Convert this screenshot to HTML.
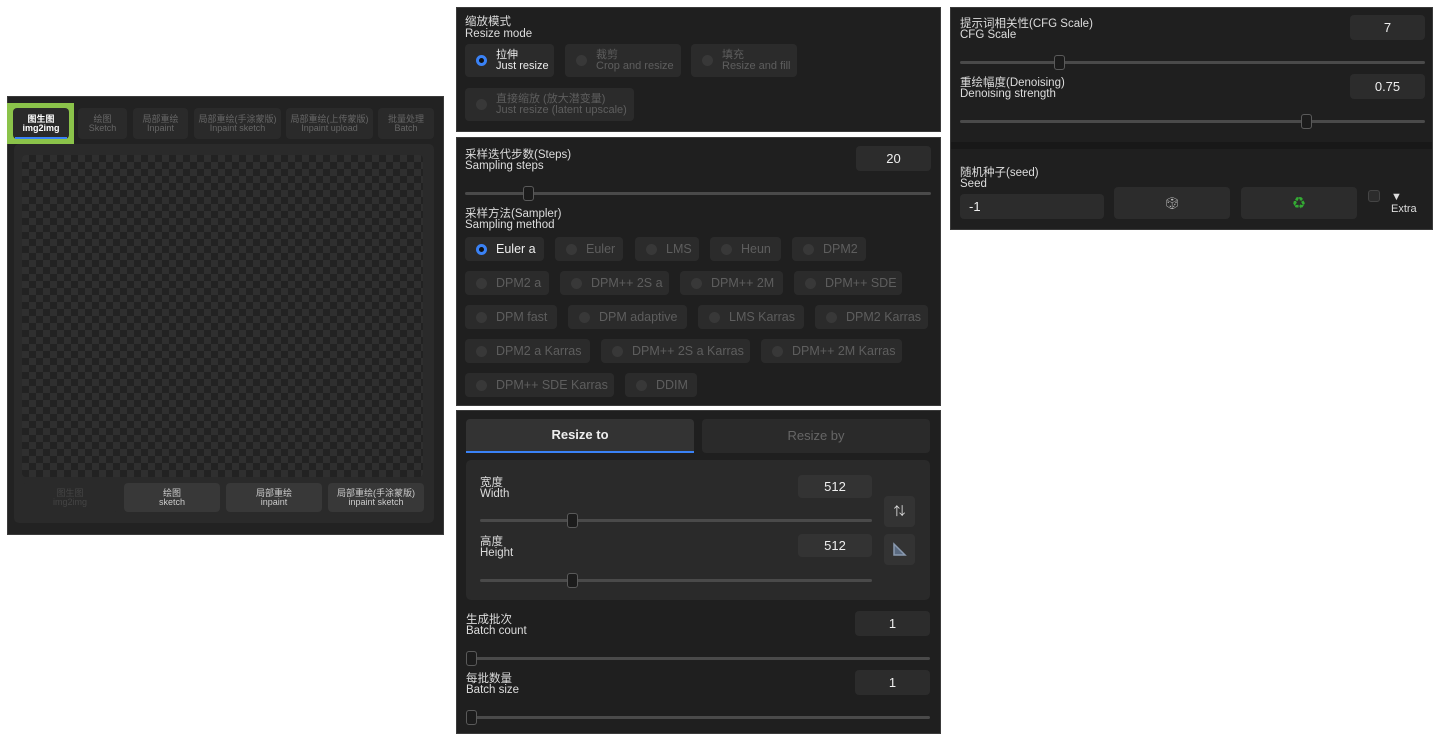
<!DOCTYPE html>
<html><head><meta charset="utf-8"><style>
*{box-sizing:border-box;margin:0;padding:0}
body{width:1440px;height:736px;background:#fff;position:relative;overflow:hidden;font-family:"Liberation Sans","Noto Sans CJK SC",sans-serif;color:#e8e8e8}
.a{position:absolute}
.panel{position:absolute;background:#1f1f1f;border:1px solid #3a3a3a}
.lbl{position:absolute;font-size:11px;line-height:11px;color:#ddd}
.num{position:absolute;background:#2c2c2c;border-radius:4px;text-align:center;font-size:13px;color:#eee}
.track{position:absolute;height:3px;background:#4a4a4a;border-radius:2px}
.thumb{position:absolute;width:11px;height:15px;background:#1c1c1c;border:1px solid #5a5a5a;border-radius:3px}
.rad{position:absolute;background:#2b2b2b;border-radius:4px;font-size:12.5px;color:#5e5e5e;display:flex;align-items:center;padding-left:11px;white-space:nowrap}
.rad i{display:inline-block;width:11px;height:11px;border-radius:50%;background:#383838;margin-right:9px;flex:none}
.rad.on{color:#eee}
.rad.on i{background:#111;border:3px solid #3a82f6}
.btn{position:absolute;background:#303030;border-radius:4px;text-align:center;font-size:9px;line-height:9px;color:#ccc}
.checker{background-color:#2f2f2f;background-image:linear-gradient(45deg,#222 25%,transparent 25%,transparent 75%,#222 75%),linear-gradient(45deg,#222 25%,transparent 25%,transparent 75%,#222 75%);background-size:14px 14px;background-position:0 0,7px 7px}
</style></head><body>

<!-- LEFT -->
<div class="panel" style="left:7px;top:96px;width:437px;height:439px;background:#222"></div>
<div class="a" style="left:7px;top:103px;width:67px;height:41px;background:#8bc34a"></div>
<div class="btn" style="left:13px;top:108px;width:56px;height:31px;background:#2a2a2a;color:#fff;padding-top:7px;font-weight:bold">图生图<br>img2img<div class="a" style="left:2px;bottom:0;width:52px;height:2px;background:#3a82f6"></div></div>
<div class="btn" style="left:78px;top:108px;width:49px;height:31px;background:#2a2a2a;color:#666;padding-top:7px">绘图<br>Sketch</div>
<div class="btn" style="left:133px;top:108px;width:55px;height:31px;background:#2a2a2a;color:#666;padding-top:7px">局部重绘<br>Inpaint</div>
<div class="btn" style="left:194px;top:108px;width:87px;height:31px;background:#2a2a2a;color:#666;padding-top:7px">局部重绘(手涂蒙版)<br>Inpaint sketch</div>
<div class="btn" style="left:286px;top:108px;width:87px;height:31px;background:#2a2a2a;color:#666;padding-top:7px">局部重绘(上传蒙版)<br>Inpaint upload</div>
<div class="btn" style="left:378px;top:108px;width:56px;height:31px;background:#2a2a2a;color:#666;padding-top:7px">批量处理<br>Batch</div>
<div class="a" style="left:14px;top:144px;width:420px;height:379px;background:#2a2a2a;border-radius:5px"></div>
<div class="a checker" style="left:22px;top:155px;width:401px;height:322px;border-radius:4px"></div>
<div class="btn" style="left:22px;top:483px;width:96px;height:29px;background:#2a2a2a;color:#444;padding-top:6px">图生图<br>img2img</div>
<div class="btn" style="left:124px;top:483px;width:96px;height:29px;background:#383838;padding-top:6px">绘图<br>sketch</div>
<div class="btn" style="left:226px;top:483px;width:96px;height:29px;background:#383838;padding-top:6px">局部重绘<br>inpaint</div>
<div class="btn" style="left:328px;top:483px;width:96px;height:29px;background:#383838;padding-top:6px">局部重绘(手涂蒙版)<br>inpaint sketch</div>

<!-- MIDDLE 1 -->
<div class="panel" style="left:456px;top:7px;width:485px;height:125px"></div>
<div class="lbl" style="left:465px;top:16px;font-size:11.5px;line-height:12px">缩放模式<br>Resize mode</div>
<div class="rad on" style="left:465px;top:44px;width:89px;height:33px;line-height:11px;font-size:11px"><i></i><span>拉伸<br>Just resize</span></div>
<div class="rad" style="left:565px;top:44px;width:116px;height:33px;line-height:11px;font-size:11px"><i></i><span>裁剪<br>Crop and resize</span></div>
<div class="rad" style="left:691px;top:44px;width:106px;height:33px;line-height:11px;font-size:11px"><i></i><span>填充<br>Resize and fill</span></div>
<div class="rad" style="left:465px;top:88px;width:169px;height:33px;line-height:11px;font-size:11px"><i></i><span>直接缩放 (放大潜变量)<br>Just resize (latent upscale)</span></div>

<!-- MIDDLE 2 -->
<div class="panel" style="left:456px;top:137px;width:485px;height:269px"></div>
<div class="lbl" style="left:465px;top:150px;font-size:11.5px">采样迭代步数(Steps)<br>Sampling steps</div>
<div class="num" style="left:856px;top:146px;width:75px;height:25px;line-height:25px">20</div>
<div class="track" style="left:465px;top:192px;width:466px"></div>
<div class="thumb" style="left:523px;top:186px"></div>
<div class="lbl" style="left:465px;top:209px;font-size:11.5px">采样方法(Sampler)<br>Sampling method</div>
<div class="rad on" style="left:465px;top:237px;width:79px;height:24px"><i></i>Euler a</div>
<div class="rad" style="left:555px;top:237px;width:68px;height:24px"><i></i>Euler</div>
<div class="rad" style="left:635px;top:237px;width:64px;height:24px"><i></i>LMS</div>
<div class="rad" style="left:710px;top:237px;width:71px;height:24px"><i></i>Heun</div>
<div class="rad" style="left:792px;top:237px;width:74px;height:24px"><i></i>DPM2</div>
<div class="rad" style="left:465px;top:271px;width:84px;height:24px"><i></i>DPM2 a</div>
<div class="rad" style="left:560px;top:271px;width:109px;height:24px"><i></i>DPM++ 2S a</div>
<div class="rad" style="left:680px;top:271px;width:103px;height:24px"><i></i>DPM++ 2M</div>
<div class="rad" style="left:794px;top:271px;width:108px;height:24px"><i></i>DPM++ SDE</div>
<div class="rad" style="left:465px;top:305px;width:92px;height:24px"><i></i>DPM fast</div>
<div class="rad" style="left:568px;top:305px;width:119px;height:24px"><i></i>DPM adaptive</div>
<div class="rad" style="left:698px;top:305px;width:106px;height:24px"><i></i>LMS Karras</div>
<div class="rad" style="left:815px;top:305px;width:113px;height:24px"><i></i>DPM2 Karras</div>
<div class="rad" style="left:465px;top:339px;width:125px;height:24px"><i></i>DPM2 a Karras</div>
<div class="rad" style="left:601px;top:339px;width:149px;height:24px"><i></i>DPM++ 2S a Karras</div>
<div class="rad" style="left:761px;top:339px;width:141px;height:24px"><i></i>DPM++ 2M Karras</div>
<div class="rad" style="left:465px;top:373px;width:149px;height:24px"><i></i>DPM++ SDE Karras</div>
<div class="rad" style="left:625px;top:373px;width:72px;height:24px"><i></i>DDIM</div>

<!-- MIDDLE 3 -->
<div class="panel" style="left:456px;top:410px;width:485px;height:324px"></div>
<div class="a" style="left:466px;top:419px;width:228px;height:34px;background:#333;border-radius:4px 4px 0 0;text-align:center;line-height:32px;font-size:13px;font-weight:bold;color:#eee;border-bottom:2px solid #3a82f6">Resize to</div>
<div class="a" style="left:702px;top:419px;width:228px;height:34px;background:#2a2a2a;border-radius:4px;text-align:center;line-height:34px;font-size:13px;color:#666">Resize by</div>
<div class="a" style="left:466px;top:460px;width:464px;height:140px;background:#2a2a2a;border-radius:5px"></div>
<div class="lbl" style="left:480px;top:478px;font-size:11.5px">宽度<br>Width</div>
<div class="num" style="left:798px;top:475px;width:74px;height:23px;line-height:23px;background:#333">512</div>
<div class="track" style="left:480px;top:519px;width:392px"></div>
<div class="thumb" style="left:567px;top:513px"></div>
<div class="lbl" style="left:480px;top:537px;font-size:11.5px">高度<br>Height</div>
<div class="num" style="left:798px;top:534px;width:74px;height:23px;line-height:23px;background:#333">512</div>
<div class="track" style="left:480px;top:579px;width:392px"></div>
<div class="thumb" style="left:567px;top:573px"></div>
<div class="a" style="left:884px;top:496px;width:31px;height:31px;background:#333;border-radius:4px;text-align:center;line-height:30px;font-size:12px;color:#ddd">⇅</div>
<div class="a" style="left:884px;top:534px;width:31px;height:31px;background:#333;border-radius:4px"><svg width="31" height="31"><path d="M10 10 L10 21 L21 21 Z" fill="#5a6a80" stroke="#8a9ab0" stroke-width="1.5"/></svg></div>
<div class="lbl" style="left:466px;top:615px;font-size:11.5px">生成批次<br>Batch count</div>
<div class="num" style="left:855px;top:611px;width:75px;height:25px;line-height:25px">1</div>
<div class="track" style="left:466px;top:657px;width:464px"></div>
<div class="thumb" style="left:466px;top:651px"></div>
<div class="lbl" style="left:466px;top:674px;font-size:11.5px">每批数量<br>Batch size</div>
<div class="num" style="left:855px;top:670px;width:75px;height:25px;line-height:25px">1</div>
<div class="track" style="left:466px;top:716px;width:464px"></div>
<div class="thumb" style="left:466px;top:710px"></div>

<!-- RIGHT -->
<div class="panel" style="left:950px;top:7px;width:483px;height:223px"></div>
<div class="a" style="left:951px;top:142px;width:481px;height:7px;background:#181818"></div>
<div class="lbl" style="left:960px;top:19px;font-size:11.5px">提示词相关性(CFG Scale)<br>CFG Scale</div>
<div class="num" style="left:1350px;top:15px;width:75px;height:25px;line-height:25px">7</div>
<div class="track" style="left:960px;top:61px;width:465px"></div>
<div class="thumb" style="left:1054px;top:55px"></div>
<div class="lbl" style="left:960px;top:78px;font-size:11.5px">重绘幅度(Denoising)<br>Denoising strength</div>
<div class="num" style="left:1350px;top:74px;width:75px;height:25px;line-height:25px">0.75</div>
<div class="track" style="left:960px;top:120px;width:465px"></div>
<div class="thumb" style="left:1301px;top:114px"></div>
<div class="lbl" style="left:960px;top:168px;font-size:11.5px">随机种子(seed)<br>Seed</div>
<div class="num" style="left:960px;top:194px;width:144px;height:25px;line-height:25px;text-align:left;padding-left:9px">-1</div>
<div class="num" style="left:1114px;top:187px;width:116px;height:32px;line-height:32px;font-size:12px;color:#bbb">🎲︎</div>
<div class="num" style="left:1241px;top:187px;width:116px;height:32px;line-height:32px;font-size:12px;color:#3a3">♻</div>
<div class="a" style="left:1368px;top:190px;width:12px;height:12px;background:#2c2c2c;border:1px solid #444;border-radius:3px"></div>
<div class="lbl" style="left:1391px;top:191px;line-height:12px">▼<br>Extra</div>
</body></html>
